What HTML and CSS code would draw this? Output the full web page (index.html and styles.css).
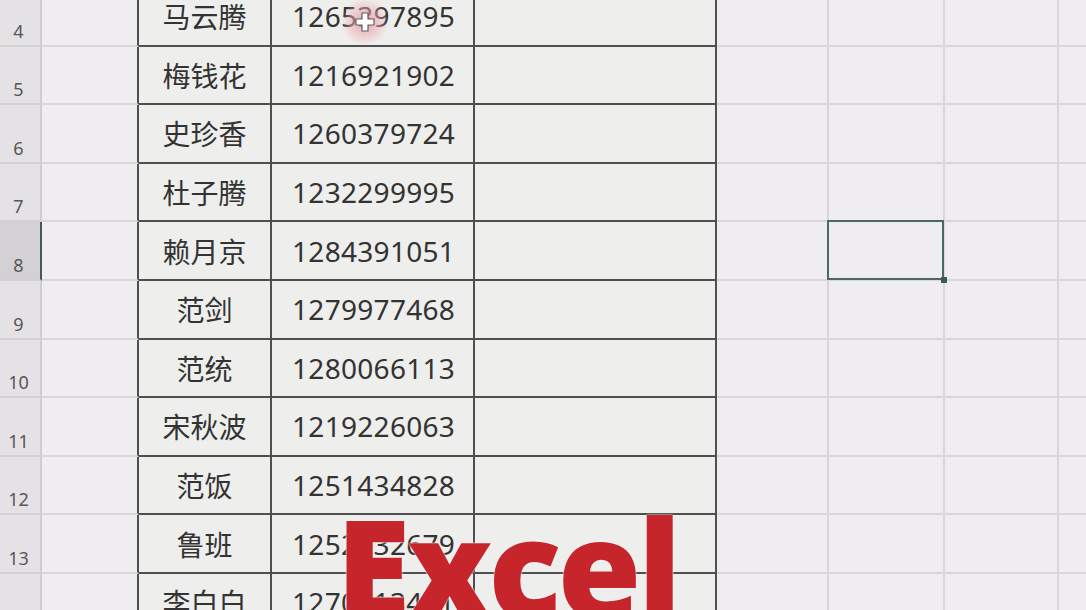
FILE: index.html
```html
<!DOCTYPE html>
<html lang="zh">
<head>
<meta charset="utf-8">
<title>Excel</title>
<link rel="stylesheet" href="styles.css">
</head>
<body>
<div class="screen">
  <div class="sheet">
    <div class="row"><div class="hdr">4</div><div class="c a"></div><div class="c t name">马云腾</div><div class="c t num">1265397895</div><div class="c t"></div><div class="c"></div><div class="c"></div><div class="c"></div><div class="c last"></div></div>
    <div class="row"><div class="hdr">5</div><div class="c a"></div><div class="c t name">梅钱花</div><div class="c t num">1216921902</div><div class="c t"></div><div class="c"></div><div class="c"></div><div class="c"></div><div class="c last"></div></div>
    <div class="row"><div class="hdr">6</div><div class="c a"></div><div class="c t name">史珍香</div><div class="c t num">1260379724</div><div class="c t"></div><div class="c"></div><div class="c"></div><div class="c"></div><div class="c last"></div></div>
    <div class="row"><div class="hdr">7</div><div class="c a"></div><div class="c t name">杜子腾</div><div class="c t num">1232299995</div><div class="c t"></div><div class="c"></div><div class="c"></div><div class="c"></div><div class="c last"></div></div>
    <div class="row"><div class="hdr sel">8</div><div class="c a"></div><div class="c t name">赖月京</div><div class="c t num">1284391051</div><div class="c t"></div><div class="c"></div><div class="c active"></div><div class="c"></div><div class="c last"></div></div>
    <div class="row"><div class="hdr">9</div><div class="c a"></div><div class="c t name">范剑</div><div class="c t num">1279977468</div><div class="c t"></div><div class="c"></div><div class="c"></div><div class="c"></div><div class="c last"></div></div>
    <div class="row"><div class="hdr">10</div><div class="c a"></div><div class="c t name">范统</div><div class="c t num">1280066113</div><div class="c t"></div><div class="c"></div><div class="c"></div><div class="c"></div><div class="c last"></div></div>
    <div class="row"><div class="hdr">11</div><div class="c a"></div><div class="c t name">宋秋波</div><div class="c t num">1219226063</div><div class="c t"></div><div class="c"></div><div class="c"></div><div class="c"></div><div class="c last"></div></div>
    <div class="row"><div class="hdr">12</div><div class="c a"></div><div class="c t name">范饭</div><div class="c t num">1251434828</div><div class="c t"></div><div class="c"></div><div class="c"></div><div class="c"></div><div class="c last"></div></div>
    <div class="row"><div class="hdr">13</div><div class="c a"></div><div class="c t name">鲁班</div><div class="c t num">1252032679</div><div class="c t"></div><div class="c"></div><div class="c"></div><div class="c"></div><div class="c last"></div></div>
    <div class="row"><div class="hdr">14</div><div class="c a"></div><div class="c t name">李白白</div><div class="c t num">1270813471</div><div class="c t"></div><div class="c"></div><div class="c"></div><div class="c"></div><div class="c last"></div></div>
  </div>

  <div class="cursor">
    <svg width="22" height="22" viewBox="0 0 22 22">
      <path d="M8 2h6v6h6v6h-6v6H8v-6H2V8h6z" fill="#ffffff" stroke="#6a5a5c" stroke-width="1.2"/>
    </svg>
  </div>

  <div class="title">Excel</div>
</div>
</body>
</html>
```

FILE: styles.css
```css
html, body {
  margin: 0;
  padding: 0;
  background: #eeebed;
  overflow: hidden;
}

.screen {
  position: relative;
  width: 1086px;
  height: 610px;
  overflow: hidden;
  background: #eeebed;
  font-family: "Noto Sans", "Noto Sans CJK SC", sans-serif;
  color: #303030;
}

.sheet {
  margin-top: -12px;
  display: flex;
  flex-direction: column;
}

.row {
  display: grid;
  grid-template-columns: 42px 97px 133px 203px 242px 112px 116px 114px 40px;
  height: 58.6px;
}

.hdr {
  background: #e4e2e4;
  border-right: 2px solid #cfcdcf;
  border-bottom: 2px solid #d2d0d2;
  display: flex;
  align-items: flex-end;
  justify-content: center;
  font-size: 18px;
  line-height: 1;
  padding-bottom: 5px;
  padding-right: 3px;
  color: #575757;
  box-sizing: border-box;
}

.hdr.sel {
  background: #d3d1d3;
  border-right: 2px solid #4a5654;
}

.c {
  border-right: 2px solid #d8d6d8;
  border-bottom: 2px solid #d8d6d8;
  box-sizing: border-box;
  background: #efedef;
}

.c.a {
  border-right-color: #4f4f4f;
}

.c.t {
  border-right-color: #4f4f4f;
  border-bottom-color: #4f4f4f;
  background: #eeeeec;
  display: flex;
  align-items: center;
  font-size: 28px;
  color: #333333;
}

.c.name {
  justify-content: center;
  font-family: "Noto Sans CJK SC", sans-serif;
}

.c.num {
  padding-left: 20px;
  font-family: "Noto Sans", "Open Sans", sans-serif;
  letter-spacing: 0.3px;
}

.c.last {
  border-right: none;
}

.c.active {
  position: relative;
}

.c.active::after {
  content: "";
  position: absolute;
  left: -2px;
  top: -2px;
  right: -1px;
  bottom: -1px;
  border: 2px solid #4b6864;
}

.c.active::before {
  content: "";
  position: absolute;
  right: -4px;
  bottom: -4px;
  width: 6px;
  height: 6px;
  background: #3f5a56;
  z-index: 2;
}

.cursor {
  position: absolute;
  left: 341px;
  top: -2px;
  width: 48px;
  height: 48px;
  border-radius: 50%;
  background: radial-gradient(circle, rgba(228, 150, 160, 0.8) 0%, rgba(235, 170, 178, 0.5) 40%, rgba(238, 200, 205, 0) 70%);
  display: flex;
  align-items: center;
  justify-content: center;
}

.title {
  position: absolute;
  left: 336px;
  top: 479px;
  font-family: "Open Sans", sans-serif;
  font-weight: 800;
  font-size: 136px;
  line-height: 1.3;
  letter-spacing: -4px;
  color: #c6252b;
  text-shadow: 0 0 2px #ffffff, 0 0 1px #ffffff;
}
```
